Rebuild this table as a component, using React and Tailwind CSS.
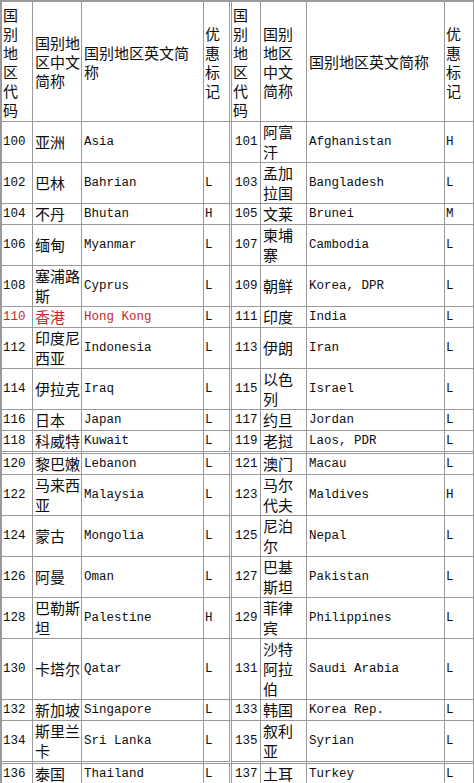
const cols = 'grid grid-cols-[31px_49px_122px_28px_29px_46px_138px_29px]';

const rows = [
  { h: 'h-[41px]', l: ['100', '亚洲', 'Asia', ''], r: ['101', '阿富\n汗', 'Afghanistan', 'H'] },
  { h: 'h-[41px]', l: ['102', '巴林', 'Bahrian', 'L'], r: ['103', '孟加\n拉国', 'Bangladesh', 'L'] },
  { h: 'h-[21px]', l: ['104', '不丹', 'Bhutan', 'H'], r: ['105', '文莱', 'Brunei', 'M'] },
  { h: 'h-[41px]', l: ['106', '缅甸', 'Myanmar', 'L'], r: ['107', '柬埔\n寨', 'Cambodia', 'L'] },
  { h: 'h-[41px]', l: ['108', '塞浦路\n斯', 'Cyprus', 'L'], r: ['109', '朝鲜', 'Korea, DPR', 'L'] },
  { h: 'h-[21px]', l: ['110', '香港', 'Hong Kong', 'L'], r: ['111', '印度', 'India', 'L'], red: true },
  { h: 'h-[41px]', l: ['112', '印度尼\n西亚', 'Indonesia', 'L'], r: ['113', '伊朗', 'Iran', 'L'] },
  { h: 'h-[41px]', l: ['114', '伊拉克', 'Iraq', 'L'], r: ['115', '以色\n列', 'Israel', 'L'] },
  { h: 'h-[21px]', l: ['116', '日本', 'Japan', 'L'], r: ['117', '约旦', 'Jordan', 'L'] },
  { h: 'h-[23px]', l: ['118', '科威特', 'Kuwait', 'L'], r: ['119', '老挝', 'Laos, PDR', 'L'], double: true },
  { h: 'h-[21px]', l: ['120', '黎巴嫩', 'Lebanon', 'L'], r: ['121', '澳门', 'Macau', 'L'] },
  { h: 'h-[41px]', l: ['122', '马来西\n亚', 'Malaysia', 'L'], r: ['123', '马尔\n代夫', 'Maldives', 'H'] },
  { h: 'h-[41px]', l: ['124', '蒙古', 'Mongolia', 'L'], r: ['125', '尼泊\n尔', 'Nepal', 'L'] },
  { h: 'h-[41px]', l: ['126', '阿曼', 'Oman', 'L'], r: ['127', '巴基\n斯坦', 'Pakistan', 'L'] },
  { h: 'h-[41px]', l: ['128', '巴勒斯\n坦', 'Palestine', 'H'], r: ['129', '菲律\n宾', 'Philippines', 'L'] },
  { h: 'h-[61px]', l: ['130', '卡塔尔', 'Qatar', 'L'], r: ['131', '沙特\n阿拉\n伯', 'Saudi Arabia', 'L'] },
  { h: 'h-[21px]', l: ['132', '新加坡', 'Singapore', 'L'], r: ['133', '韩国', 'Korea Rep.', 'L'] },
  { h: 'h-[43px]', l: ['134', '斯里兰\n卡', 'Sri Lanka', 'L'], r: ['135', '叙利\n亚', 'Syrian', 'L'], double: true },
  { h: 'h-[21px]', l: ['136', '泰国', 'Thailand', 'L'], r: ['137', '土耳', 'Turkey', 'L'], top: true },
];

const cjk = "font-['Noto_Sans_CJK_SC',sans-serif] text-[15px] leading-[20px]";
const mono = "font-['Liberation_Mono',monospace] text-[12.5px] leading-[20px]";
const head = "font-['Noto_Sans_CJK_SC',sans-serif] text-[15px] leading-[19px]";

function Cell({ children, font, mid, double, top, red, pad = 'pl-[2px]' }) {
  return (
    <div
      className={[
        'flex overflow-hidden whitespace-pre border-[#9a9a9a]',
        top ? 'items-start' : 'items-center',
        mid ? 'border-r-[3px] border-double' : 'border-r',
        double ? 'border-b-[3px] border-double' : 'border-b',
        red ? 'text-[#c8282c]' : 'text-[#0d0d0d]',
        pad,
        font,
      ].join(' ')}
    >
      {children}
    </div>
  );
}

function Half({ data, mid, double, top, red, first }) {
  return (
    <>
      <Cell font={mono} double={double} top={top} red={red} pad={first ? 'pl-[1px]' : 'pl-[3px]'}>{data[0]}</Cell>
      <Cell font={cjk} double={double} top={top} red={red}>{data[1]}</Cell>
      <Cell font={mono} double={double} top={top} red={red}>{data[2]}</Cell>
      <Cell font={mono} double={double} top={top} mid={mid} pad="pl-[1px]">{data[3]}</Cell>
    </>
  );
}

export default function App() {
  return (
    <div className="w-[474px] h-[783px] overflow-hidden bg-white">
      <div className="border-l-2 border-t-2 border-[#9a9a9a]">
        <div className={`${cols} h-[120px]`}>
          <Cell font={head} pad="pl-[1px]">{'国\n别\n地\n区\n代\n码'}</Cell>
          <Cell font={head}>{'国别地\n区中文\n简称'}</Cell>
          <Cell font={head}>{'国别地区英文简\n称'}</Cell>
          <Cell font={head} mid pad="pl-[1px]">{'优\n惠\n标\n记'}</Cell>
          <Cell font={head} pad="pl-[1px]">{'国\n别\n地\n区\n代\n码'}</Cell>
          <Cell font={head}>{'国别\n地区\n中文\n简称'}</Cell>
          <Cell font={head}>{'国别地区英文简称'}</Cell>
          <Cell font={head} pad="pl-[1px]">{'优\n惠\n标\n记'}</Cell>
        </div>
        {rows.map((row) => (
          <div key={row.l[0]} className={`${cols} ${row.h}`}>
            <Half data={row.l} mid double={row.double} top={row.top} red={row.red} first />
            <Half data={row.r} double={row.double} top={row.top} />
          </div>
        ))}
      </div>
    </div>
  );
}
